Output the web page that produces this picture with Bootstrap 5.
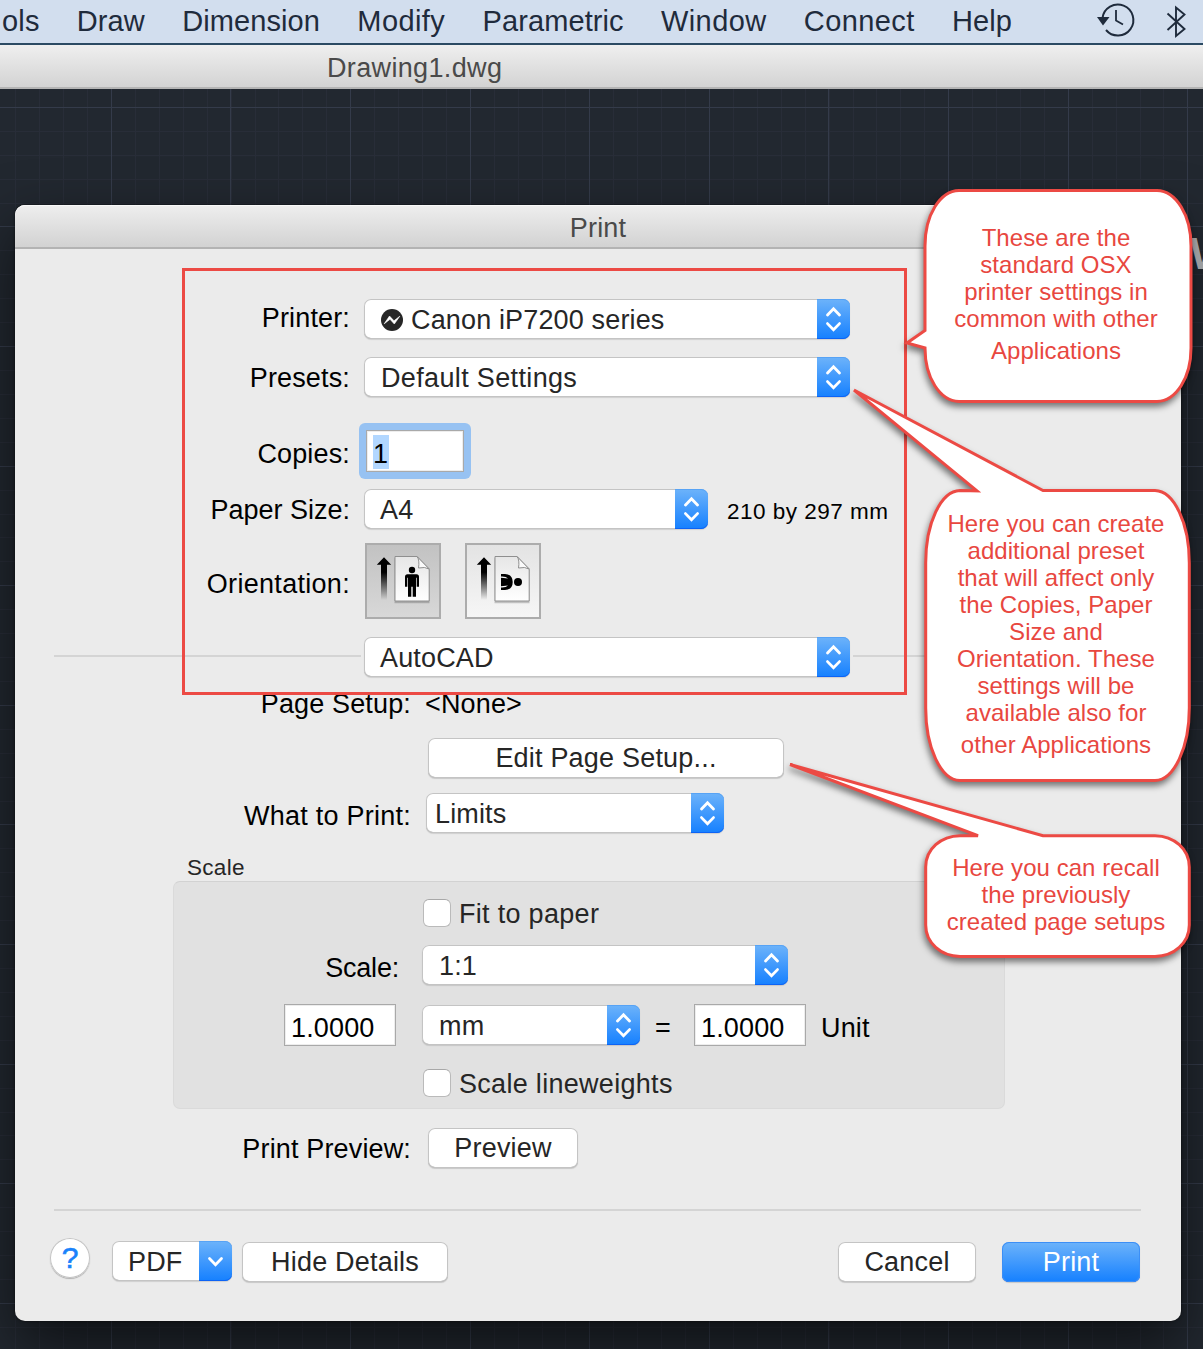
<!DOCTYPE html>
<html lang="en">
<head>
<meta charset="utf-8">
<meta name="viewport" content="width=device-width, initial-scale=1">
<title>Print</title>
<link href="https://cdn.jsdelivr.net/npm/bootstrap@5.3.0/dist/css/bootstrap.min.css" rel="stylesheet">
<style>
  body{width:1203px;height:1349px;overflow:hidden;font-family:"Liberation Sans",Arial,sans-serif;font-size:27px;letter-spacing:.15px;color:#000;background:#222830}
  .menubar{height:45px;background:#d2deee;border-bottom:2px solid #2b4a63;color:#1f2b3c;font-size:29px;line-height:42px;letter-spacing:.1px}
  .menubar .menu-items{gap:37.3px;width:1012px;flex:none}
  .menubar .loose{letter-spacing:.4px}
  .doc-title{height:44px;background:linear-gradient(#efefef,#d3d3d3);border-bottom:2px solid #b4b4b4;color:#4a4a4a;line-height:47px;padding-left:327px;letter-spacing:.35px}
  .draw-area{height:1260px;padding:116px 22px 28px 15px;
    background:
      repeating-linear-gradient(90deg,transparent 0 110.8px,#343b4a 110.8px 111.8px,transparent 111.8px 119.6px),
      repeating-linear-gradient(180deg,transparent 0 17.9px,#343b4a 17.9px 18.9px,transparent 18.9px 119.6px),
      repeating-linear-gradient(90deg,transparent 0 15.3px,#282d38 15.3px 16.3px,transparent 16.3px 23.92px),
      repeating-linear-gradient(180deg,transparent 0 17.9px,#282d38 17.9px 18.9px,transparent 18.9px 23.92px),
      #222830}
  .print-dialog{height:1116px;border-radius:10px;background:#ebebeb;box-shadow:0 0 3px rgba(0,0,0,.6),0 24px 60px rgba(0,0,0,.6)}
  .dlg-title{height:44px;border-radius:10px 10px 0 0;background:linear-gradient(#eee,#d2d2d2);border-bottom:2px solid #b3b3b3;color:#4a4a4a;line-height:47px;text-align:center;box-shadow:inset 0 1px #f8f8f8}
  .dlg-body{padding:50px 40px 0 39px}
  .form-line{display:flex;height:40px}
  .lbl{width:296px;margin-right:14px;text-align:right;white-space:nowrap;flex:none;line-height:43px}
  .lbl-wide{width:357px}
  .lbl.l38{line-height:39px}
  .popup{display:flex;height:40px;border-radius:7px;background:#fff;box-shadow:inset 0 0 0 1px #c4c4c4,inset 0 -1px #a2a2a2,0 1px 1px rgba(0,0,0,.12);line-height:43px;color:#262626;padding-left:17px;flex:none;white-space:nowrap}
  .cap{width:33px;height:40px;margin-left:auto;border-radius:0 7px 7px 0;background:linear-gradient(#6db3fa,#1580ff);box-shadow:inset 0 1px #57a3f5,inset 0 -1px #0d63f5;flex:none}
  .cap svg{display:block}
  .pbtn{height:40px;padding:0;border:0;border-radius:7px;background:#fff;box-shadow:inset 0 0 0 1px #c4c4c4,inset 0 -1px #a2a2a2,0 1px 1px rgba(0,0,0,.15);color:#262626;font-size:27px;line-height:40px;letter-spacing:.2px;flex:none;text-align:center}
  .pbtn.main{background:linear-gradient(#6db3fa,#1580ff);box-shadow:inset 0 0 0 1px #3c8ff6,inset 0 -1px #0d63f5,0 1px 1px rgba(0,0,0,.15);color:#fff}
  .num{height:42px;border:1px solid #a9a9a9;box-shadow:inset 0 0 0 1px #ededed;background:#fff;width:112px;line-height:46px;padding-left:6px;flex:none}
  .ring{border-radius:6px;background:#97c2f2;padding:7px;margin-left:-5px;height:56px}
  .ring .num{width:98px;padding:4px 0 0 6px;line-height:38px}
  .sel{display:inline-block;width:16px;height:34px;background:#b2d7ff;vertical-align:top}
  .small-t{font-size:22.5px;letter-spacing:.5px}
  .orient{width:76px;height:76px;border:2px solid #acacac;background:linear-gradient(#e3e3e3,#f6f6f6);flex:none}
  .orient.on{background:linear-gradient(#c2c2c2,#d8d8d8)}
  .orient svg{display:block}
  .rule{height:2px;background:#d4d4d4}
  .group-box{margin-left:119px;width:832px;height:228px;border-radius:7px;background:#e1e1e1;border:1px solid #dadada;border-top-color:#d2d2d2;padding-top:17px}
  .chk-line{display:flex;margin-left:249px;height:28px;line-height:31px;color:#262626;letter-spacing:.3px}
  .chk{width:28px;height:28px;border-radius:6px;background:#fff;border:1px solid #bababa;border-top-color:#a8a8a8;flex:none;margin-right:8px}
  .help{width:40px;height:40px;border-radius:50%;background:#fff;box-shadow:inset 0 0 0 1px #c4c4c4,0 1px 1px rgba(0,0,0,.25);color:#1a82fb;-webkit-text-stroke:.6px #1a82fb;font-size:30px;line-height:40px;text-align:center;letter-spacing:0}
  .frame{left:182px;top:268px;width:725px;height:427px;border:3px solid #ec4a44}
  .notes{left:0;top:0}
  .note-text{width:250px;left:931px;color:#e8473f;font-size:24px;line-height:27px;letter-spacing:.05px;text-align:center;white-space:nowrap}
  .note-text .last{margin-top:5px}
  .compass{left:1190px;top:229px;width:13px;overflow:hidden;font-size:45px;line-height:50px;font-weight:bold;color:#9b9ea1}
</style>
<script src="https://cdn.jsdelivr.net/npm/bootstrap@5.3.0/dist/js/bootstrap.bundle.min.js"></script>
</head>
<body class="position-relative">
<svg width="0" height="0" class="position-absolute">
  <defs>
    <symbol id="updown" viewBox="0 0 33 40"><path d="M10.500 16 16.500 9.800 22.500 16M10.500 24.600 16.500 30.800 22.500 24.600" fill="none" stroke="#fff" stroke-width="2.800" stroke-linecap="round"/></symbol>
    <linearGradient id="fade" x1="0" y1="0" x2="0" y2="1"><stop offset=".35" stop-color="#000"/><stop offset="1" stop-color="#000" stop-opacity="0"/></linearGradient>
    <linearGradient id="sheet" x1="0" y1="0" x2="0" y2="1"><stop offset="0" stop-color="#e6e6e6"/><stop offset="1" stop-color="#fff"/></linearGradient>
    <symbol id="page" viewBox="0 0 72 72">
      <path d="M9.800 19.800 17 12.300 24.200 19.800H20V55H14V19.800Z" fill="url(#fade)"/>
      <path d="M27.500 13H51L62.500 25V58H27.500Z" fill="#000" opacity=".2" transform="translate(0 .3)"/>
      <path d="M28 11.500H50L62.200 24V56H28Z" fill="url(#sheet)" stroke="#8f8f8f" stroke-width="1"/>
      <path d="M50 11.500Q52.800 15 51.500 23Q58 21.500 62.200 24Z" fill="#fafafa" stroke="#8f8f8f" stroke-width="1"/>
    </symbol>
  </defs>
</svg>

<nav class="menubar d-flex">
  <div class="menu-items d-flex justify-content-end text-nowrap">
    <span>ols</span><span>Draw</span><span>Dimension</span><span class="loose">Modify</span><span>Parametric</span><span class="loose">Window</span><span class="loose">Connect</span><span>Help</span>
  </div>
  <svg width="191" height="43" viewBox="1012 0 191 43" fill="none" stroke="#1f2b3c">
    <path d="M1102.500 18A15.500 15.500 0 1 1 1106 30" stroke-width="2"/>
    <path d="M1097 17H1109.500L1103 25.500Z" fill="#1f2b3c" stroke="none"/>
    <path d="M1116 10V20.500L1123 24.500" stroke-width="1.800"/>
    <path d="M1167.500 13.500 1184.500 29 1176 36V7.500L1184.500 14.500 1167.500 30" stroke-width="1.900"/>
  </svg>
</nav>
<div class="doc-title">Drawing1.dwg</div>

<main class="draw-area">
  <section class="print-dialog">
    <div class="dlg-title">Print</div>
    <div class="dlg-body">
      <div class="form-line"><div class="lbl l38">Printer:</div>
        <div class="popup" style="width:486px">
          <svg width="22" height="22" viewBox="0 0 22 22" style="margin:10px 8px 0 0"><circle cx="11" cy="11" r="11" fill="#262626"/><path d="M3.200 14.800 8.500 7 13 11.800 18.800 7.200 13.300 15 9 10.300Z" fill="#fff" stroke="#fff" stroke-width=".6"/></svg>
          <span>Canon iP7200 series</span><span class="cap"><svg width="33" height="40"><use href="#updown"/></svg></span></div>
      </div>
      <div class="form-line" style="margin-top:18px"><div class="lbl">Presets:</div>
        <div class="popup" style="width:486px"><span style="letter-spacing:.35px">Default Settings</span><span class="cap"><svg width="33" height="40"><use href="#updown"/></svg></span></div>
      </div>
      <div class="d-flex" style="margin-top:26px;height:56px"><div class="lbl" style="line-height:63px">Copies:</div>
        <div class="ring"><div class="num"><span class="sel">1</span></div></div>
      </div>
      <div class="form-line" style="margin-top:10px"><div class="lbl" style="letter-spacing:0">Paper Size:</div>
        <div class="popup" style="width:344px;padding-left:16px"><span>A4</span><span class="cap"><svg width="33" height="40"><use href="#updown"/></svg></span></div>
        <span class="small-t text-nowrap" style="margin-left:19px;line-height:45px">210 by 297 mm</span>
      </div>
      <div class="d-flex" style="margin-top:14px;height:76px"><div class="lbl" style="line-height:83px;margin-right:15px;letter-spacing:.3px">Orientation:</div>
        <div class="orient on"><svg width="72" height="72"><use href="#page"/><g fill="#000"><circle cx="45" cy="25" r="3.200"/><path d="M40.500 29.300h9q2.500 0 2.500 2.500v10h-2.300v-9h-.7v19h-3.300v-10h-1.400v10H41v-19h-.7v9H38v-10q0-2.500 2.500-2.500Z"/></g></svg></div>
        <div class="orient" style="margin-left:24px"><svg width="72" height="72"><use href="#page"/><g fill="#000"><circle cx="51" cy="37" r="4"/><path d="M34 29H38Q45.700 29.500 45.700 37T38 45H34V42.500Q39 42.800 41 40.600L34 41.200V32.800L41 33.400Q39 31.200 34 31.500Z"/></g></svg></div>
      </div>
      <div class="form-line" style="margin-top:18px"><div class="rule" style="width:307px;margin:18px 3px 0 0"></div>
        <div class="popup" style="width:486px;padding-left:16px"><span>AutoCAD</span><span class="cap"><svg width="33" height="40"><use href="#updown"/></svg></span></div>
        <div class="rule flex-fill" style="margin:18px 0 0 3px"></div>
      </div>
      <div class="d-flex" style="margin-top:6px;height:42px;line-height:43px"><div class="lbl lbl-wide">Page Setup:</div><span>&lt;None&gt;</span></div>
      <button class="btn pbtn d-block" style="width:356px;margin:13px 0 0 374px">Edit Page Setup...</button>
      <div class="form-line" style="margin-top:15px"><div class="lbl lbl-wide" style="line-height:47px;margin-right:15px;letter-spacing:.25px">What to Print:</div>
        <div class="popup" style="width:298px;padding-left:9px"><span>Limits</span><span class="cap"><svg width="33" height="40"><use href="#updown"/></svg></span></div>
      </div>
      <div class="small-t" style="margin:19px 0 0 133px;height:29px;line-height:31px;letter-spacing:.3px;color:#262626">Scale</div>
      <div class="group-box">
        <div class="chk-line"><span class="chk"></span><span>Fit to paper</span></div>
        <div class="form-line" style="margin-top:18px"><div class="lbl" style="width:225px;margin-right:23px;line-height:47px;letter-spacing:-.2px">Scale:</div>
          <div class="popup" style="width:366px"><span>1:1</span><span class="cap"><svg width="33" height="40"><use href="#updown"/></svg></span></div>
        </div>
        <div class="d-flex" style="margin-top:19px;padding-left:110px;height:42px">
          <div class="num">1.0000</div>
          <div class="popup" style="width:218px;margin:1px 0 0 26px"><span>mm</span><span class="cap"><svg width="33" height="40"><use href="#updown"/></svg></span></div>
          <span style="width:54px;padding-left:15px;line-height:49px">=</span>
          <div class="num">1.0000</div>
          <span style="margin-left:15px;line-height:49px">Unit</span>
        </div>
        <div class="chk-line" style="margin-top:23px"><span class="chk"></span><span>Scale lineweights</span></div>
      </div>
      <div class="form-line" style="margin-top:19px"><div class="lbl lbl-wide" style="margin-right:17px">Print Preview:</div>
        <button class="btn pbtn" style="width:150px">Preview</button></div>
      <div class="rule" style="margin-top:41px"></div>
      <div class="d-flex" style="margin:27px 0 0 -4px;padding-right:1px">
        <span class="help">?</span>
        <div class="popup" style="width:120px;margin:3px 10px 0 22px;padding-left:16px"><span>PDF</span><span class="cap"><svg width="33" height="40"><path d="M10.500 17.500 16.500 23.700 22.500 17.500" fill="none" stroke="#fff" stroke-width="2.800" stroke-linecap="round"/></svg></span></div>
        <button class="btn pbtn" style="width:206px;margin-top:4px">Hide Details</button>
        <button class="btn pbtn ms-auto" style="width:138px;margin-top:4px">Cancel</button>
        <button class="btn pbtn main" style="width:138px;margin:4px 0 0 26px">Print</button>
      </div>
    </div>
  </section>
</main>

<div class="compass position-absolute">W</div>
<div class="frame position-absolute"></div>
<svg class="notes position-absolute" width="1203" height="1349" viewBox="0 0 1203 1349" fill="#fff" stroke="#ec4a44" stroke-width="3" style="filter:drop-shadow(-1px 4px 3px rgba(0,0,0,.5))">
  <path d="M959 190.500H1157C1176 191 1191 215 1191 246V348C1191 378 1176 401 1157 401.500H959C940 401 925 378 925 348L907 343 925 330.500V246C925 215 940 191 959 190.500Z"/>
  <path d="M977 490.800 854 390 1043 490.500H1155C1174 491 1189.300 523 1189.300 563V708C1189.300 748 1174 780 1155 780.500H960C941 780 925.700 748 925.700 708V563C925.700 523 941 491 960 490.500Z"/>
  <path d="M978 835.700 790 764.500 1043 835.700H1155C1174 836 1189.300 849 1189.300 867V925C1189.300 943 1174 956 1155 956.500H960C941 956 925.700 943 925.700 925V867C925.700 849 941 836 960 835.700Z"/>
</svg>
<div class="note-text position-absolute" style="top:224px"><div>These are the</div><div>standard OSX</div><div>printer settings in</div><div>common with other</div><div class="last">Applications</div></div>
<div class="note-text position-absolute" style="top:510px"><div>Here you can create</div><div>additional preset</div><div>that will affect only</div><div>the Copies, Paper</div><div>Size and</div><div>Orientation. These</div><div>settings will be</div><div>available also for</div><div class="last">other Applications</div></div>
<div class="note-text position-absolute" style="top:854px"><div>Here you can recall</div><div>the previously</div><div>created page setups</div></div>
</body>
</html>
